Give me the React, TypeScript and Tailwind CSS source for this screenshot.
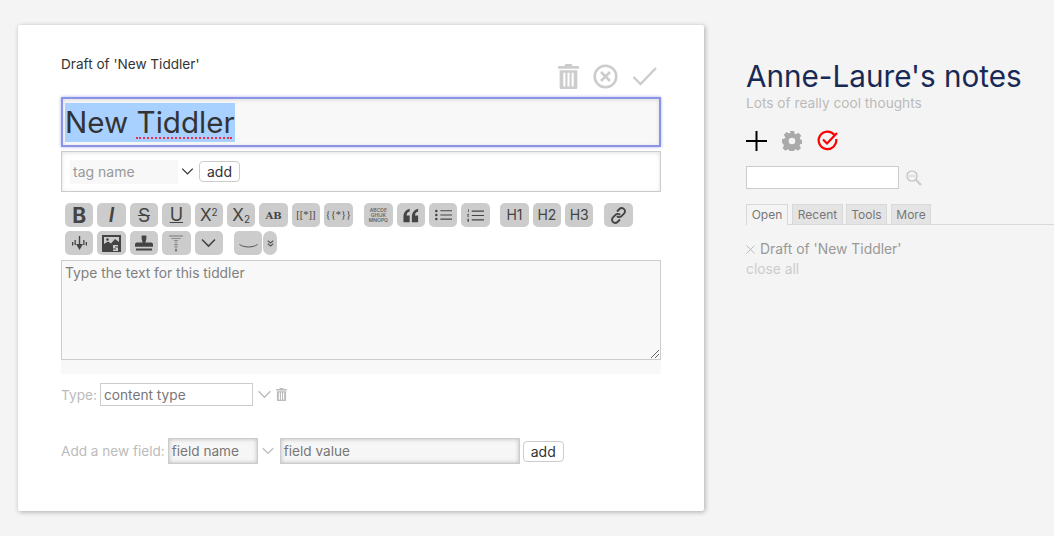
import { ReactNode } from "react";

const font = { fontFamily: "Inter, sans-serif" };

function ToolButton({ children, className = "" }: { children: ReactNode; className?: string }) {
  return (
    <div className={`flex h-[24px] w-[28.4px] shrink-0 items-center justify-center rounded-[5px] bg-[#cccccc] text-[#444444] ${className}`}>
      {children}
    </div>
  );
}

function Chevron({ className = "" }: { className?: string }) {
  return (
    <svg className={className} viewBox="0 0 16 10" fill="none" stroke="currentColor" strokeWidth={1.6}>
      <path d="M1.5 1.5 8 8l6.500-6.500" />
    </svg>
  );
}

function Trash({ className = "" }: { className?: string }) {
  return (
    <svg className={className} viewBox="0 0 20 24" fill="currentColor">
      <path d="M7 0h6l1 2h6v2.500H0V2h6zM1.500 6h17v16.500a1.500 1.500 0 0 1-1.500 1.500H3a1.500 1.500 0 0 1-1.500-1.500zM5 8.500v13h2v-13zm4 0v13h2v-13zm4 0v13h2v-13z" />
    </svg>
  );
}

export default function App() {
  return (
    <div className="flex h-[536px] w-[1054px] overflow-hidden bg-[#f4f4f4]" style={font}>
      {/* Draft tiddler */}
      <div className="ml-[18px] mt-[25px] h-[486px] w-[686px] rounded-[2px] bg-white px-[43px] shadow-[1px_1px_5px_rgba(0,0,0,0.3)]">
        <div className="flex h-[72px] items-start justify-between">
          <div className="mt-[30px] text-[13.6px] leading-[18px] text-[#333333]">Draft of 'New Tiddler'</div>
          <div className="mr-[4px] mt-[39px] flex items-center gap-[15px] text-[#cccccc]">
            <Trash className="-mr-[1px] h-[25px] w-[21px]" />
            <svg className="h-[25px] w-[25px]" viewBox="0 0 25 25" fill="none" stroke="currentColor">
              <circle cx="12.500" cy="12.500" r="10.800" strokeWidth={2.600} />
              <path d="m8 8 9 9M17 8l-9 9" strokeWidth={2.600} />
            </svg>
            <svg className="-ml-[1px] h-[21px] w-[25px]" viewBox="0 0 25 21" fill="none" stroke="currentColor" strokeWidth={2.400}>
              <path d="m1.500 11 7 7L24 2" />
            </svg>
          </div>
        </div>

        <div className="flex h-[50px] items-center border-2 border-[#8b93e6] bg-[#f8f8f8] pl-[2px] pt-[1px] shadow-[0_0_3px_#aab0ee,inset_0_1px_4px_rgba(0,0,0,0.12)]">
          <span className="relative bg-[#a8d1ff] text-[29.6px] leading-[39px] text-[#333333]">
            New Tiddler
            <span className="absolute bottom-[3px] left-[71px] right-[3px] border-b-2 border-dotted border-[#ee2f4f]" />
          </span>
        </div>

        <div className="mt-[4px] flex h-[41px] items-center border border-[#cccccc] pl-[8px] shadow-[inset_0_1px_4px_rgba(0,0,0,0.12)]">
          <div className="flex h-[24px] w-[108px] items-center bg-[#f8f8f8] pl-[3px] text-[14px] text-[#999999]">tag name</div>
          <Chevron className="ml-[3px] h-[9px] w-[13px] text-[#333333]" />
          <div className="ml-[5px] flex h-[21px] w-[41px] items-center justify-center rounded-[4px] border border-[#cccccc] text-[14px] text-[#333333]">add</div>
        </div>

        {/* Editor toolbar */}
        <div className="ml-[4px] mt-[11px] flex items-center gap-[4px]">
          <ToolButton><span className="text-[21px] font-bold leading-none">B</span></ToolButton>
          <ToolButton><span className="text-[20px] font-semibold italic leading-none">I</span></ToolButton>
          <ToolButton><span className="text-[19px] leading-none line-through">S</span></ToolButton>
          <ToolButton><span className="text-[18px] leading-none underline">U</span></ToolButton>
          <ToolButton><span className="text-[17px] leading-none">X<sup className="text-[10px]">2</sup></span></ToolButton>
          <ToolButton><span className="text-[17px] leading-none">X<sub className="text-[10px]">2</sub></span></ToolButton>
          <ToolButton><span className="text-[10px] font-bold" style={{ fontFamily: "DejaVu Serif, serif" }}>AB</span></ToolButton>
          <ToolButton><span className="text-[10.500px]" style={{ fontFamily: "Liberation Serif, serif" }}>[[*]]</span></ToolButton>
          <ToolButton><span className="text-[10.500px]" style={{ fontFamily: "Liberation Serif, serif" }}>{"{{*}}"}</span></ToolButton>

          <ToolButton className="ml-[7.600px]">
            <span className="text-center text-[5px] font-semibold leading-[5px] text-[#666666]">ABCDE<br />GHIJK<br />MNOPQ</span>
          </ToolButton>
          <ToolButton>
            <svg className="h-[15px] w-[16px]" viewBox="0 0 18 15" fill="currentColor">
              <path d="M7.500 0C3.500 1 .5 4 .5 9v6h7V7.500H4C4 5 5.500 3.500 7.500 3zM17 0c-4 1-7 4-7 9v6h7V7.500h-3.500c0-2.500 1.500-4 3.500-4.500z" />
            </svg>
          </ToolButton>
          <ToolButton>
            <svg className="h-[12px] w-[17px]" viewBox="0 0 19 13" fill="currentColor">
              <circle cx="1.500" cy="1.900" r="1.400" /><circle cx="1.500" cy="6.500" r="1.400" /><circle cx="1.500" cy="11.100" r="1.400" />
              <path d="M6 1.200h13v1.200H6zM6 5.900h13v1.200H6zM6 10.500h13v1.200H6z" />
            </svg>
          </ToolButton>
          <ToolButton>
            <svg className="h-[13px] w-[17px]" viewBox="0 0 18 13" fill="currentColor">
              <path d="M1 0h.8v3H1zM.5 5h1.500v.7l-.9 1.300h.9v.7H.5zM.5 10h1.500v3H.5zM5 1.200h13v1.200H5zM5 5.900h13v1.200H5zM5 10.500h13v1.200H5z" />
            </svg>
          </ToolButton>

          <ToolButton className="ml-[6.600px]"><span className="text-[14px] leading-none">H1</span></ToolButton>
          <ToolButton><span className="text-[14px] leading-none">H2</span></ToolButton>
          <ToolButton><span className="text-[14px] leading-none">H3</span></ToolButton>

          <ToolButton className="ml-[7px]">
            <svg className="h-[17px] w-[17px]" viewBox="0 0 17 17" fill="none" stroke="currentColor" strokeWidth={1.900}>
              <path d="M7 4.500 9.500 2a3.200 3.200 0 0 1 5.500 2.300c0 .9-.3 1.700-1 2.300l-2.500 2.500a3.200 3.200 0 0 1-4.600 0" />
              <path d="m10 12.500-2.500 2.500A3.200 3.200 0 0 1 2 12.700c0-.9.3-1.700 1-2.300l2.500-2.500a3.200 3.200 0 0 1 4.600 0" />
            </svg>
          </ToolButton>
        </div>
        <div className="ml-[4px] mt-[4px] flex items-center gap-[4px]">
          <ToolButton>
            <svg className="h-[15px] w-[17px]" viewBox="0 0 17 15" fill="currentColor">
              <path d="M7.800 0h1.400v8H12l-3.500 6L5 8h2.800zM1 6h1.300v3.500H1zM3.500 4h1.300v5H3.500zM12.200 4h1.300v5h-1.300zM14.700 6H16v3.500h-1.300z" />
            </svg>
          </ToolButton>
          <ToolButton>
            <svg className="h-[17px] w-[19px]" viewBox="0 0 19 17" fill="currentColor">
              <path fillRule="evenodd" d="M0 0h19v17H0zm2 2v7l4-2.500 3 2 4-4.500 4 3V2z" />
              <circle cx="5.500" cy="4.500" r="1.300" />
              <path fill="#cccccc" d="M11 10h5v1.500h-3v1h3V16h-5v-1.500h3v-1h-3z" />
            </svg>
          </ToolButton>
          <ToolButton>
            <svg className="h-[16px] w-[18px]" viewBox="0 0 19 16" fill="currentColor">
              <path d="M7 0h5v3.500l-1 4h6a2 2 0 0 1 2 2V12H0V9.500a2 2 0 0 1 2-2h6l-1-4zM1 13.800h17V16H1z" />
            </svg>
          </ToolButton>
          <ToolButton>
            <svg className="h-[17px] w-[14px] text-[#777777]" viewBox="0 0 15 17" fill="currentColor">
              <path d="M0 0h15v1H0zM2.500 2.500h10v.8H2.500zM5.500 5h4v1.200h-4zM6.500 7.300h2v1h-2zM5.500 9.300h4v1.200h-4zM6 11.600h3v1.200H6zM6.500 14h2v3h-2z" />
            </svg>
          </ToolButton>
          <ToolButton><Chevron className="h-[10px] w-[17px]" /></ToolButton>
          <ToolButton className="ml-[7px]">
            <svg className="mt-[6px] h-[4px] w-[19px]" viewBox="0 0 19 4" fill="none" stroke="#555555" strokeWidth={1}>
              <path d="M.5.500C5 3.800 14 3.800 18.500.5" />
            </svg>
          </ToolButton>
          <div className="-ml-[3px] flex h-[24px] w-[14px] items-center justify-center rounded-[7px] bg-[#cccccc] text-[#555555]">
            <svg className="h-[7px] w-[7px]" viewBox="0 0 7 7" fill="none" stroke="currentColor" strokeWidth={1.100}>
              <path d="m.8.8 2.700 2.200L6.200.8M.8 3.800l2.700 2.200 2.700-2.200" />
            </svg>
          </div>
        </div>

        <div className="mt-[5px] h-[114px] bg-[#f8f8f8]">
          <div className="relative h-[100px] border border-[#cccccc] px-[3px] py-[4px] text-[13.8px] leading-[16px] text-[#808080]">
            Type the text for this tiddler
            <svg className="absolute bottom-[1px] right-[1px] h-[8px] w-[8px]" viewBox="0 0 8 8" fill="none" stroke="#666666">
              <path d="M8 0 0 8M8 4 4 8" />
            </svg>
          </div>
        </div>

        <div className="mt-[9px] flex h-[23px] items-center text-[13.7px] text-[#bbbbbb]">
          <span className="mr-[3px] pt-[1px]">Type:</span>
          <div className="flex h-[23px] w-[153px] items-center border border-[#cccccc] pl-[3px] pt-[2px] text-[#777777]">content type</div>
          <Chevron className="ml-[4px] h-[9px] w-[15px]" />
          <Trash className="ml-[4px] h-[13px] w-[11px]" />
        </div>

        <div className="mt-[32px] flex h-[26px] items-center text-[13.6px] text-[#bbbbbb]">
          <span className="mr-[3px] pt-[1px]">Add a new field:</span>
          <div className="flex h-[26px] w-[90px] items-center border border-[#cccccc] bg-[#f6f6f6] pl-[3px] pt-[1px] text-[#777777] shadow-[inset_0_0_4px_rgba(0,0,0,0.25)]">field name</div>
          <Chevron className="ml-[3px] h-[8px] w-[14px]" />
          <div className="ml-[5px] flex h-[26px] w-[240px] items-center border border-[#cccccc] bg-[#f6f6f6] pl-[3px] pt-[1px] text-[#777777] shadow-[inset_0_0_4px_rgba(0,0,0,0.25)]">field value</div>
          <div className="ml-[3px] flex h-[21px] w-[41px] items-center justify-center rounded-[4px] border border-[#cccccc] text-[14px] text-[#333333]">add</div>
        </div>
      </div>

      {/* Sidebar */}
      <div className="ml-[42px] flex-1 pt-[58px]">
        <div className="h-[36px] text-[29.7px] leading-[36px] text-[#182955]">Anne-Laure's notes</div>
        <div className="-mt-[1px] text-[13.7px] leading-[20px] text-[#bbbbbb]">Lots of really cool thoughts</div>
        <div className="mt-[17px] flex items-center gap-[15px]">
          <svg className="h-[20px] w-[21px]" viewBox="0 0 21 20" fill="#000000">
            <path d="M9.500 0h2v9H21v2h-9.500v9h-2v-9H0V9h9.500z" />
          </svg>
          <svg className="h-[20px] w-[20px]" viewBox="0 0 24 24" fill="#aaaaaa">
            <path fillRule="evenodd" d="M9.500 0h5l.7 3.300 1.600.7 2.900-1.800 3.400 3.400-1.800 2.900.7 1.600 3 .7v4.400l-3.300.7-.7 1.600 1.800 2.900-3.400 3.400-2.900-1.800-1.600.7-.7 3.300h-5l-.7-3.300-1.600-.7-2.900 1.800-3.400-3.400 1.800-2.900-.7-1.600L0 14.200V9.800l3.300-.7.700-1.600-1.800-2.900 3.400-3.400 2.900 1.800 1.600-.7zM12 8a4 4 0 1 0 0 8 4 4 0 0 0 0-8z" />
          </svg>
          <svg className="h-[21px] w-[21px]" viewBox="0 0 21 21" fill="none" stroke="#ff0000" strokeWidth={2.200}>
            <path d="M17.500 5a8.800 8.800 0 1 0 1.700 4" />
            <path d="m6 9.500 4 4L20 3" />
          </svg>
        </div>
        <div className="mt-[15px] flex items-center">
          <div className="h-[23px] w-[153px] border border-[#cccccc] bg-white" />
          <svg className="ml-[7px] h-[16px] w-[16px]" viewBox="0 0 16 16" fill="none" stroke="#cccccc">
            <circle cx="6" cy="6" r="5" strokeWidth={1.700} />
            <path d="m9.500 9.500 5.500 5.500" strokeWidth={2.400} />
            <path d="M3 6h1.200M5.400 6h1.200M7.800 6H9" stroke="#aaaaaa" />
          </svg>
        </div>
        <div className="mt-[15px] flex h-[21px] items-end border-b border-[#d8d8d8] text-[12px] text-[#777777]">
          <div className="-mb-[1px] flex h-[21px] w-[42px] items-center justify-center border border-b-0 border-[#d8d8d8] bg-[#f4f4f4]">Open</div>
          <div className="ml-[4px] flex h-[20px] w-[51px] items-center justify-center border border-b-0 border-[#d8d8d8] bg-[#e4e4e4]">Recent</div>
          <div className="ml-[3px] flex h-[20px] w-[41px] items-center justify-center border border-b-0 border-[#d8d8d8] bg-[#e4e4e4]">Tools</div>
          <div className="ml-[4px] flex h-[20px] w-[40px] items-center justify-center border border-b-0 border-[#d8d8d8] bg-[#e4e4e4]">More</div>
        </div>
        <div className="mt-[14px] flex items-center text-[13.900px] leading-[20px] text-[#999999]">
          <svg className="mr-[5px] h-[9px] w-[9px]" viewBox="0 0 9 9" fill="none" stroke="#bbbbbb">
            <path d="m.5.5 8 8M8.500.5l-8 8" />
          </svg>
          Draft of 'New Tiddler'
        </div>
        <div className="text-[13.800px] leading-[20px] text-[#cccccc]">close all</div>
      </div>
    </div>
  );
}
